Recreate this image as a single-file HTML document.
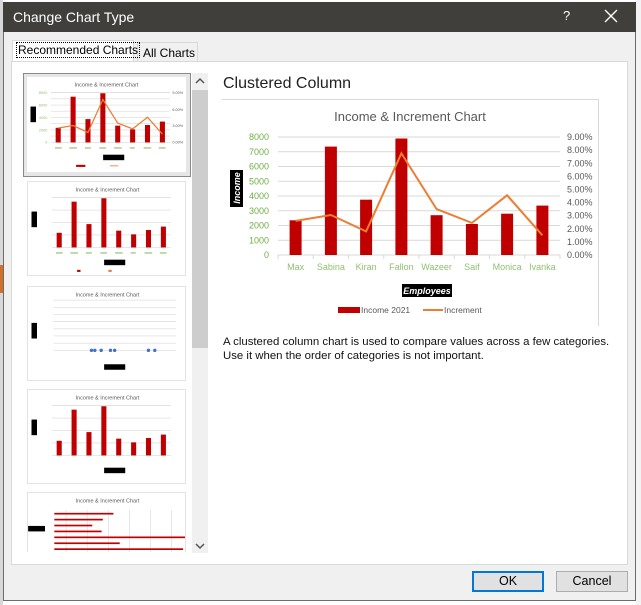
<!DOCTYPE html>
<html><head><meta charset="utf-8"><style>
*{margin:0;padding:0;box-sizing:border-box}
body{width:641px;height:605px;overflow:hidden;background:#fff;font-family:"Liberation Sans",sans-serif;position:relative}
.abs{position:absolute;white-space:nowrap}
#dlg{left:3px;top:2px;width:633px;height:599px;background:#f0f0f0;border:1px solid #6d6d6d}
#title{left:3px;top:2px;width:633px;height:30px;background:#403f3c;color:#fff;font-size:14px;line-height:30px;padding-left:10px}
.tab1{left:12px;top:40px;width:122px;height:21px;background:#fff;border:1px solid #d9d9d9;border-bottom:none;font-size:12px;padding:2px 3px;}
.tab1 span{border:1px dotted #000;padding:0 1px}
.tab2{left:137px;top:42px;width:61px;height:19px;background:#f0f0f0;border:1px solid #d9d9d9;border-bottom:none;font-size:12px;padding:3px 5px}
#panel{left:11px;top:61px;width:617px;height:504px;background:#fff;border:1px solid #d9d9d9}
.th{position:absolute;left:27px;width:159px;height:95px;background:#fff;border:1px solid #e3e3e3}
.btn{top:571px;height:21px;width:72px;background:#e1e1e1;border:1px solid #adadad;font-size:12.5px;text-align:center;line-height:19px}
svg text{font-family:"Liberation Sans",sans-serif}
</style></head><body>
<div class="abs" style="left:0;top:0;width:3px;height:605px;background:#d8d8d8"></div>
<div class="abs" style="left:0;top:265px;width:3px;height:28px;background:#d0702c"></div>
<div class="abs" style="left:636px;top:0;width:5px;height:605px;background:#f3f3f3"></div>
<div class="abs" id="dlg"></div>
<div class="abs" id="title">Change Chart Type</div>
<div class="abs" style="left:563px;top:8px;color:#fff;font-size:13px">?</div>
<svg class="abs" style="left:604px;top:9px" width="14" height="14"><path d="M1 1L13 13M13 1L1 13" stroke="#fff" stroke-width="1.4"/></svg>
<div class="abs tab2">All Charts</div>
<div class="abs" id="panel"></div>
<div class="abs tab1"><span>Recommended Charts</span></div>

<div class="abs" style="left:192px;top:73px;width:16px;height:480px;background:#f0f0f0"></div>
<div class="abs" style="left:192px;top:90px;width:16px;height:258px;background:#cdcdcd"></div>
<svg class="abs" style="left:195px;top:77px" width="10" height="8"><path d="M1 6L5 2L9 6" stroke="#555" stroke-width="1.5" fill="none"/></svg>
<svg class="abs" style="left:195px;top:542px" width="10" height="8"><path d="M1 2L5 6L9 2" stroke="#555" stroke-width="1.5" fill="none"/></svg>

<div class="abs" style="left:23px;top:73px;width:168px;height:104px;border:1px solid #8a8a8a;background:#e6e6e6"></div>
<div class="th" style="top:77px;border:none">
<svg width="159" height="95" viewBox="0 0 376 225">
<text x="188" y="22" font-size="13" fill="#595959" text-anchor="middle">Income &amp; Increment Chart</text>
<g stroke="#d9d9d9" stroke-width="1.5"><line x1="56" x2="338" y1="155" y2="155"/><line x1="56" x2="338" y1="140" y2="140"/><line x1="56" x2="338" y1="125.5" y2="125.5"/><line x1="56" x2="338" y1="110.7" y2="110.7"/><line x1="56" x2="338" y1="96" y2="96"/><line x1="56" x2="338" y1="81" y2="81"/><line x1="56" x2="338" y1="66.5" y2="66.5"/><line x1="56" x2="338" y1="51.7" y2="51.7"/><line x1="56" x2="338" y1="37" y2="37"/></g>
<g fill="#c00000"><rect x="67.6" y="120.3" width="12" height="34.7"/><rect x="102.9" y="46.6" width="12" height="108.4"/><rect x="138.1" y="99.7" width="12" height="55.3"/><rect x="173.4" y="38.5" width="12" height="116.5"/><rect x="208.6" y="115.2" width="12" height="39.8"/><rect x="243.9" y="124" width="12" height="31"/><rect x="279.1" y="113.7" width="12" height="41.3"/><rect x="314.4" y="105.6" width="12" height="49.4"/></g>
<polyline points="73.6,120.9 108.9,115 144.1,131.4 179.4,53.4 214.6,109.1 249.9,122.9 285.1,95.3 320.4,135.3" fill="none" stroke="#ed7d31" stroke-width="3"/>
<g fill="#8fbf6f" font-size="9" text-anchor="end"><text x="48" y="158">0</text><text x="48" y="129">2000</text><text x="48" y="99">4000</text><text x="48" y="70">6000</text><text x="48" y="40">8000</text></g>
<g fill="#595959" font-size="9"><text x="344" y="158">0.00%</text><text x="344" y="119">3.00%</text><text x="344" y="80">6.00%</text><text x="344" y="40">9.00%</text></g>
<g fill="#b5d3a0"><rect x="66" y="166" width="16" height="4"/><rect x="100" y="166" width="18" height="4"/><rect x="137" y="166" width="14" height="4"/><rect x="171" y="166" width="16" height="4"/><rect x="206" y="166" width="18" height="4"/><rect x="243" y="166" width="12" height="4"/><rect x="276" y="166" width="18" height="4"/><rect x="312" y="166" width="16" height="4"/></g>
<rect x="8" y="70" width="13" height="37" fill="#000"/><rect x="180" y="184" width="50" height="13" fill="#000"/>
<rect x="116" y="208" width="22" height="5" fill="#c00000"/><line x1="196" x2="216" y1="210.5" y2="210.5" stroke="#ed7d31" stroke-width="2"/>
</svg></div>

<div class="th" style="top:181px">
<svg width="159" height="95" viewBox="0 0 376 225">
<text x="188" y="22" font-size="13" fill="#595959" text-anchor="middle">Income &amp; Increment Chart</text>
<g stroke="#d9d9d9" stroke-width="1.5"><line x1="56" x2="338" y1="155" y2="155"/><line x1="56" x2="338" y1="125.5" y2="125.5"/><line x1="56" x2="338" y1="96" y2="96"/><line x1="56" x2="338" y1="66.5" y2="66.5"/><line x1="56" x2="338" y1="37" y2="37"/></g>
<g fill="#c00000"><rect x="67.6" y="120.3" width="12" height="34.7"/><rect x="102.9" y="46.6" width="12" height="108.4"/><rect x="138.1" y="99.7" width="12" height="55.3"/><rect x="173.4" y="38.5" width="12" height="116.5"/><rect x="208.6" y="115.2" width="12" height="39.8"/><rect x="243.9" y="124" width="12" height="31"/><rect x="279.1" y="113.7" width="12" height="41.3"/><rect x="314.4" y="105.6" width="12" height="49.4"/></g>
<g fill="#b5d3a0"><rect x="66" y="166" width="16" height="4"/><rect x="100" y="166" width="18" height="4"/><rect x="137" y="166" width="14" height="4"/><rect x="171" y="166" width="16" height="4"/><rect x="206" y="166" width="18" height="4"/><rect x="243" y="166" width="12" height="4"/><rect x="276" y="166" width="18" height="4"/><rect x="312" y="166" width="16" height="4"/></g>
<rect x="8" y="70" width="13" height="37" fill="#000"/><rect x="180" y="184" width="50" height="13" fill="#000"/>
<rect x="116" y="208" width="8" height="5" fill="#c00000"/><rect x="190" y="208" width="8" height="5" fill="#ed7d31"/>
</svg></div>

<div class="th" style="top:286px">
<svg width="159" height="95" viewBox="0 0 376 225">
<text x="188" y="22" font-size="13" fill="#595959" text-anchor="middle">Income &amp; Increment Chart</text>
<g stroke="#d9d9d9" stroke-width="1.5"><line x1="60" x2="350" y1="150" y2="150"/><line x1="60" x2="350" y1="133" y2="133"/><line x1="60" x2="350" y1="116" y2="116"/><line x1="60" x2="350" y1="99" y2="99"/><line x1="60" x2="350" y1="82" y2="82"/><line x1="60" x2="350" y1="65" y2="65"/><line x1="60" x2="350" y1="48" y2="48"/><line x1="60" x2="350" y1="31" y2="31"/></g>
<g fill="#4472c4"><circle cx="150" cy="150" r="4"/><circle cx="158" cy="150" r="4"/><circle cx="173" cy="150" r="4"/><circle cx="195" cy="150" r="4"/><circle cx="205" cy="150" r="4"/><circle cx="285" cy="150" r="4"/><circle cx="300" cy="150" r="4"/></g>
<rect x="8" y="85" width="13" height="37" fill="#000"/><rect x="180" y="183" width="50" height="13" fill="#000"/>
</svg></div>

<div class="th" style="top:389px">
<svg width="159" height="95" viewBox="0 0 376 225">
<text x="188" y="22" font-size="13" fill="#595959" text-anchor="middle">Income &amp; Increment Chart</text>
<g stroke="#d9d9d9" stroke-width="1.5"><line x1="56" x2="338" y1="155" y2="155"/><line x1="56" x2="338" y1="125.5" y2="125.5"/><line x1="56" x2="338" y1="96" y2="96"/><line x1="56" x2="338" y1="66.5" y2="66.5"/><line x1="56" x2="338" y1="37" y2="37"/></g>
<g fill="#c00000"><rect x="67.6" y="120.3" width="12" height="34.7"/><rect x="102.9" y="46.6" width="12" height="108.4"/><rect x="138.1" y="99.7" width="12" height="55.3"/><rect x="173.4" y="38.5" width="12" height="116.5"/><rect x="208.6" y="115.2" width="12" height="39.8"/><rect x="243.9" y="124" width="12" height="31"/><rect x="279.1" y="113.7" width="12" height="41.3"/><rect x="314.4" y="105.6" width="12" height="49.4"/></g>
<rect x="8" y="70" width="13" height="37" fill="#000"/><rect x="180" y="184" width="50" height="13" fill="#000"/>
</svg></div>

<div class="th" style="top:492px;height:60px;border-bottom:none;overflow:hidden">
<svg width="159" height="95" viewBox="0 0 376 225">
<text x="188" y="22" font-size="13" fill="#595959" text-anchor="middle">Income &amp; Increment Chart</text>
<g stroke="#d9d9d9" stroke-width="1.5"><line x1="90" x2="90" y1="40" y2="160"/><line x1="140" x2="140" y1="40" y2="160"/><line x1="190" x2="190" y1="40" y2="160"/><line x1="240" x2="240" y1="40" y2="160"/><line x1="290" x2="290" y1="40" y2="160"/><line x1="340" x2="340" y1="40" y2="160"/></g>
<g fill="#c00000"><rect x="62" y="47" width="140" height="4"/><rect x="62" y="61" width="115" height="4"/><rect x="62" y="75" width="90" height="4"/><rect x="62" y="89" width="112" height="4"/><rect x="62" y="103" width="325" height="4"/><rect x="62" y="117" width="155" height="4"/><rect x="62" y="131" width="305" height="4"/></g>
<rect x="0" y="78" width="40" height="13" fill="#000"/>
</svg></div>

<div class="abs" style="left:223px;top:75px;font-size:16px;color:#222">Clustered Column</div>
<div class="abs" style="left:222px;top:99px;width:377px;height:227px;border-top:1px solid #d9d9d9;border-right:1px solid #d9d9d9"></div>
<svg class="abs" style="left:222px;top:100px" width="376" height="225" viewBox="0 0 376 225">
<text x="188" y="21" font-size="13" fill="#595959" text-anchor="middle">Income &amp; Increment Chart</text>
<g stroke="#d9d9d9" stroke-width="1"><line x1="56" x2="338" y1="155" y2="155"/><line x1="56" x2="338" y1="140.25" y2="140.25"/><line x1="56" x2="338" y1="125.5" y2="125.5"/><line x1="56" x2="338" y1="110.75" y2="110.75"/><line x1="56" x2="338" y1="96" y2="96"/><line x1="56" x2="338" y1="81.25" y2="81.25"/><line x1="56" x2="338" y1="66.5" y2="66.5"/><line x1="56" x2="338" y1="51.75" y2="51.75"/><line x1="56" x2="338" y1="37" y2="37"/></g>
<g stroke="#d9d9d9"><line x1="91.25" x2="91.25" y1="155" y2="159"/><line x1="126.5" x2="126.5" y1="155" y2="159"/><line x1="161.75" x2="161.75" y1="155" y2="159"/><line x1="197" x2="197" y1="155" y2="159"/><line x1="232.25" x2="232.25" y1="155" y2="159"/><line x1="267.5" x2="267.5" y1="155" y2="159"/><line x1="302.75" x2="302.75" y1="155" y2="159"/><line x1="56" x2="56" y1="155" y2="159"/><line x1="338" x2="338" y1="155" y2="159"/></g>
<g fill="#c00000"><rect x="67.6" y="120.3" width="12" height="34.7"/><rect x="102.9" y="46.6" width="12" height="108.4"/><rect x="138.1" y="99.7" width="12" height="55.3"/><rect x="173.4" y="38.5" width="12" height="116.5"/><rect x="208.6" y="115.2" width="12" height="39.8"/><rect x="243.9" y="124" width="12" height="31"/><rect x="279.1" y="113.7" width="12" height="41.3"/><rect x="314.4" y="105.6" width="12" height="49.4"/></g>
<polyline points="73.6,120.9 108.9,115 144.1,131.4 179.4,53.4 214.6,109.1 249.9,122.9 285.1,95.3 320.4,135.3" fill="none" stroke="#ed7d31" stroke-width="2"/>
<g fill="#70ad47" font-size="9" text-anchor="end"><text x="47" y="158">0</text><text x="47" y="143.5">1000</text><text x="47" y="128.7">2000</text><text x="47" y="114">3000</text><text x="47" y="99.2">4000</text><text x="47" y="84.5">5000</text><text x="47" y="69.7">6000</text><text x="47" y="55">7000</text><text x="47" y="40.2">8000</text></g>
<g fill="#595959" font-size="9"><text x="345" y="158">0.00%</text><text x="345" y="145">1.00%</text><text x="345" y="131.8">2.00%</text><text x="345" y="118.7">3.00%</text><text x="345" y="105.6">4.00%</text><text x="345" y="92.5">5.00%</text><text x="345" y="79.4">6.00%</text><text x="345" y="66.3">7.00%</text><text x="345" y="53.2">8.00%</text><text x="345" y="40.2">9.00%</text></g>
<g fill="#8fbf6f" font-size="9" text-anchor="middle"><text x="73.6" y="170">Max</text><text x="108.9" y="170">Sabina</text><text x="144.1" y="170">Kiran</text><text x="179.4" y="170">Fallon</text><text x="214.6" y="170">Wazeer</text><text x="249.9" y="170">Saif</text><text x="285.1" y="170">Monica</text><text x="320.4" y="170">Ivanka</text></g>
<rect x="8" y="70" width="13" height="37" fill="#000"/>
<text transform="translate(18,88) rotate(-90)" font-size="9" font-weight="bold" font-style="italic" fill="#fff" text-anchor="middle">Income</text>
<rect x="180" y="184" width="50" height="13" fill="#000"/>
<text x="205" y="194" font-size="9" font-weight="bold" font-style="italic" fill="#fff" text-anchor="middle">Employees</text>
<rect x="116" y="207" width="22" height="6" fill="#c00000"/><text x="139" y="213" font-size="8.5" fill="#595959">Income 2021</text>
<line x1="201" x2="221" y1="210" y2="210" stroke="#ed7d31" stroke-width="2"/><text x="222" y="213" font-size="8.5" fill="#595959">Increment</text>
</svg>
<div class="abs" style="left:223px;top:335px;font-size:11.4px;line-height:14px;color:#111">A clustered column chart is used to compare values across a few categories.<br>Use it when the order of categories is not important.</div>

<div class="abs btn" style="left:472px;border:2px solid #0078d7;line-height:17px">OK</div>
<div class="abs btn" style="left:556px">Cancel</div>
</body></html>
